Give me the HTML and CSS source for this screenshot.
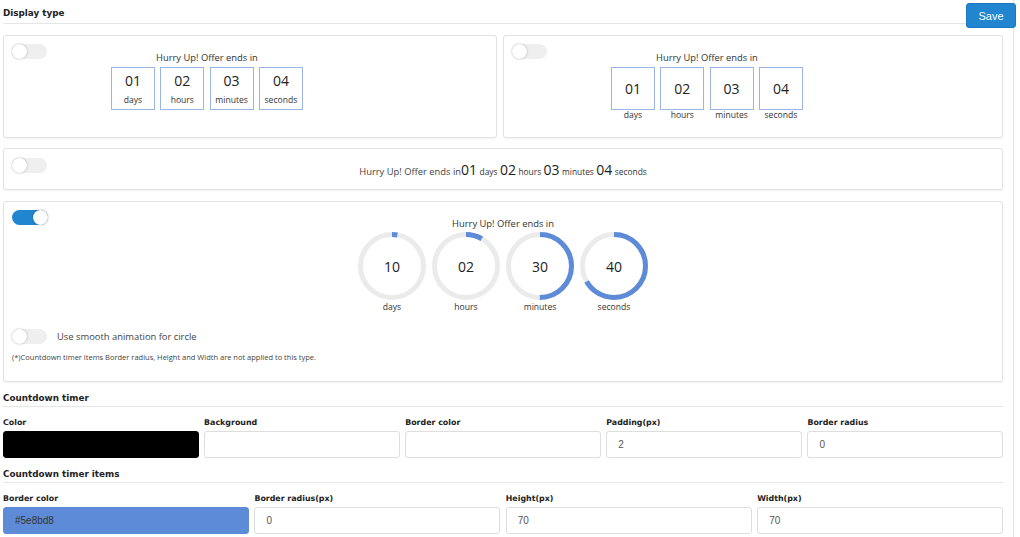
FILE: index.html
```html
<!DOCTYPE html>
<html>
<head>
<meta charset="utf-8">
<link rel="stylesheet" href="styles.css">
</head>
<body>
<div class="page">
  <div class="main">
    <div class="section-title">Display type</div>
    <button class="save">Save</button>

    <div class="row-two">
      <div class="card card-box first">
        <span class="toggle"></span>
        <div class="boxes-wrap">
          <div class="hurry">Hurry Up! Offer ends in</div>
          <div class="boxes">
            <div class="tbox"><span class="num">01</span><span class="lbl">days</span></div>
            <div class="tbox"><span class="num">02</span><span class="lbl">hours</span></div>
            <div class="tbox"><span class="num">03</span><span class="lbl">minutes</span></div>
            <div class="tbox"><span class="num">04</span><span class="lbl">seconds</span></div>
          </div>
        </div>
      </div>
      <div class="card card-box">
        <span class="toggle"></span>
        <div class="boxes-wrap">
          <div class="hurry">Hurry Up! Offer ends in</div>
          <div class="boxes">
            <div class="item2"><div class="tbox2"><span class="num">01</span></div><span class="lbl">days</span></div>
            <div class="item2"><div class="tbox2"><span class="num">02</span></div><span class="lbl">hours</span></div>
            <div class="item2"><div class="tbox2"><span class="num">03</span></div><span class="lbl">minutes</span></div>
            <div class="item2"><div class="tbox2"><span class="num">04</span></div><span class="lbl">seconds</span></div>
          </div>
        </div>
      </div>
    </div>

    <div class="card card-inline">
      <span class="toggle"></span>
      <div class="inline-text">Hurry Up! Offer ends in<span class="inum">01</span> <span class="ilbl">days</span> <span class="inum">02</span> <span class="ilbl">hours</span> <span class="inum">03</span> <span class="ilbl">minutes</span> <span class="inum">04</span> <span class="ilbl">seconds</span></div>
      <span></span>
    </div>

    <div class="card card-circle">
      <div class="circle-top">
        <span class="toggle on"></span>
        <div class="circle-wrap">
          <div class="hurry">Hurry Up! Offer ends in</div>
          <div class="circles">
            <div class="citem">
              <div class="ring">
                <svg width="70" height="70" viewBox="0 0 70 70"><circle cx="35" cy="35" r="31.5" class="track"/><circle cx="35" cy="35" r="31.5" class="prog" style="stroke-dasharray: 5.4 198"/></svg>
                <span class="cnum">10</span>
              </div>
              <span class="lbl">days</span>
            </div>
            <div class="citem">
              <div class="ring">
                <svg width="70" height="70" viewBox="0 0 70 70"><circle cx="35" cy="35" r="31.5" class="track"/><circle cx="35" cy="35" r="31.5" class="prog" style="stroke-dasharray: 16.5 198"/></svg>
                <span class="cnum">02</span>
              </div>
              <span class="lbl">hours</span>
            </div>
            <div class="citem">
              <div class="ring">
                <svg width="70" height="70" viewBox="0 0 70 70"><circle cx="35" cy="35" r="31.5" class="track"/><circle cx="35" cy="35" r="31.5" class="prog" style="stroke-dasharray: 99 198"/></svg>
                <span class="cnum">30</span>
              </div>
              <span class="lbl">minutes</span>
            </div>
            <div class="citem">
              <div class="ring">
                <svg width="70" height="70" viewBox="0 0 70 70"><circle cx="35" cy="35" r="31.5" class="track"/><circle cx="35" cy="35" r="31.5" class="prog" style="stroke-dasharray: 132 198"/></svg>
                <span class="cnum">40</span>
              </div>
              <span class="lbl">seconds</span>
            </div>
          </div>
        </div>
        <span></span>
      </div>
      <div class="smooth"><span class="toggle"></span><span class="smooth-text">Use smooth animation for circle</span></div>
      <div class="note">(*)Countdown timer items Border radius, Height and Width are not applied to this type.</div>
    </div>

    <div class="section-title sub">Countdown timer</div>
    <div class="fields five">
      <div class="field"><label>Color</label><div class="input black"></div></div>
      <div class="field"><label>Background</label><div class="input"></div></div>
      <div class="field"><label>Border color</label><div class="input"></div></div>
      <div class="field"><label>Padding(px)</label><div class="input">2</div></div>
      <div class="field"><label>Border radius</label><div class="input">0</div></div>
    </div>

    <div class="section-title sub">Countdown timer items</div>
    <div class="fields four">
      <div class="field"><label>Border color</label><div class="input blue">#5e8bd8</div></div>
      <div class="field"><label>Border radius(px)</label><div class="input">0</div></div>
      <div class="field"><label>Height(px)</label><div class="input">70</div></div>
      <div class="field"><label>Width(px)</label><div class="input">70</div></div>
    </div>
  </div>
</div>
</body>
</html>
```
FILE: styles.css
```css
* { box-sizing: border-box; }
html, body { margin: 0; padding: 0; background: #fff; }
body {
  font-family: "Open Sans", "Noto Sans", sans-serif;
  color: #333;
  width: 1020px;
  height: 537px;
  overflow: hidden;
}
.page {
  width: 1014px;
  height: 537px;
  border-right: 1px solid #e2e2e2;
}
.main {
  position: relative;
  width: 1000px;
  margin-left: 3px;
  padding-top: 7px;
}
.section-title {
  font-family: "DejaVu Sans", "Noto Sans", sans-serif;
  font-weight: bold;
  font-size: 8.8px;
  line-height: 13px;
  padding-bottom: 3px;
  border-bottom: 1px solid #e6e6e6;
  color: #222;
}
.section-title.sub { margin-top: 10px; padding-bottom: 1px; }
.save {
  position: absolute;
  right: -13px;
  top: 3px;
  width: 50px;
  height: 25px;
  background: #2185d0;
  color: #fff;
  border: 1px solid #1b78c0;
  border-radius: 3px;
  font-family: "Liberation Sans", sans-serif;
  font-size: 11px;
  padding: 0;
}
.card {
  border: 1px solid #e3e3e3;
  border-radius: 3px;
  box-shadow: 0 1px 2px rgba(0,0,0,0.06);
  background: #fff;
}
.row-two {
  display: flex;
  gap: 6px;
  margin-top: 11px;
}
.card-box {
  flex: 1;
  height: 103px;
  display: flex;
  align-items: flex-start;
  padding: 8px 8px;
}
.card-box.first { flex: 0 0 494px; }
.toggle {
  display: inline-block;
  position: relative;
  width: 35px;
  height: 15px;
  border-radius: 8px;
  background: #efefef;
  flex: none;
}
.toggle::after {
  content: "";
  position: absolute;
  left: 0;
  top: 0;
  width: 15px;
  height: 15px;
  border-radius: 50%;
  background: #fff;
  box-shadow: 0 0 2px rgba(0,0,0,0.35);
}
.toggle.on { background: #2185d0; width: 36px; }
.toggle.on::after { left: 21px; }
.boxes-wrap {
  margin-left: 64px;
  display: flex;
  flex-direction: column;
  align-items: center;
  padding-top: 7px;
}
.hurry {
  font-size: 9.4px;
  line-height: 13px;
  color: #333;
}
.boxes {
  display: flex;
  gap: 5.3px;
  margin-top: 3px;
}
.tbox, .tbox2 {
  width: 44px;
  height: 43px;
  border: 1px solid #9ab4e6;
  display: flex;
  flex-direction: column;
  align-items: center;
}
.tbox { justify-content: flex-start; padding-top: 4px; }
.tbox2 { justify-content: center; }
.num {
  font-size: 14px;
  line-height: 18px;
  color: #222;
}
.lbl {
  font-size: 8.6px;
  line-height: 11px;
  color: #333;
}
.tbox .lbl { margin-top: 5px; }
.item2 {
  display: flex;
  flex-direction: column;
  align-items: center;
}
.item2 .lbl { margin-top: 0; }

.card-inline {
  margin-top: 10px;
  height: 42px;
  display: grid;
  grid-template-columns: 1fr auto 1fr;
  align-items: start;
  padding: 9px 8px;
}
.inline-text {
  font-size: 9.4px;
  line-height: 18px;
  padding-top: 3px;
  color: #444;
  white-space: nowrap;
}
.inum { font-size: 14px; color: #222; }
.ilbl { font-size: 8.4px; color: #333; }

.card-circle {
  margin-top: 11px;
  height: 181px;
  padding: 8px 8px;
}
.circle-top {
  display: grid;
  grid-template-columns: 1fr auto 1fr;
  align-items: start;
}
.circle-wrap {
  display: flex;
  flex-direction: column;
  align-items: center;
  padding-top: 7px;
}
.circles {
  display: flex;
  gap: 4px;
  margin-top: 1px;
}
.citem {
  display: flex;
  flex-direction: column;
  align-items: center;
}
.citem .lbl { margin-top: 1px; }
.ring {
  position: relative;
  width: 70px;
  height: 70px;
}
.ring svg { display: block; transform: rotate(-90deg); }
.track { fill: none; stroke: #ebebeb; stroke-width: 5; }
.prog { fill: none; stroke: #5e8bd8; stroke-width: 5; }
.cnum {
  position: absolute;
  left: 0; right: 0; top: 0; bottom: 0;
  display: flex;
  align-items: center;
  justify-content: center;
  font-size: 14px;
  color: #222;
}
.smooth {
  display: flex;
  align-items: center;
  margin-top: 16px;
}
.smooth-text {
  font-size: 9.4px;
  margin-left: 10px;
  color: #444;
}
.note {
  font-size: 7.5px;
  color: #444;
  margin-top: 8px;
}
.fields {
  display: grid;
  gap: 5.5px;
  margin-top: 10px;
}
.fields.five { grid-template-columns: repeat(5, 1fr); }
.fields.four { grid-template-columns: repeat(4, 1fr); }
.field label {
  display: block;
  font-family: "DejaVu Sans", sans-serif;
  font-weight: bold;
  font-size: 7.9px;
  line-height: 11px;
  color: #222;
  margin-bottom: 3px;
}
.input {
  height: 27px;
  border: 1px solid #dedede;
  border-radius: 3px;
  font-family: "Liberation Sans", sans-serif;
  font-size: 10px;
  color: #555;
  line-height: 25px;
  padding-left: 11px;
}
.input.black { background: #000; border-color: #000; }
.input.blue { background: #5e8bd8; border-color: #5e8bd8; color: #333; }
```
